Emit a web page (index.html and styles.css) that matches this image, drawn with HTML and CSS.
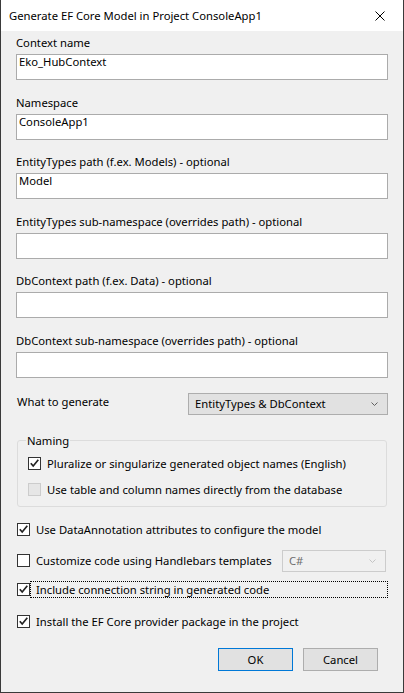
FILE: index.html
```html
<!DOCTYPE html>
<html lang="en">
<head>
  <meta charset="UTF-8">
  <meta name="viewport" content="width=device-width, initial-scale=1.0">
  <title>Generate EF Core Model</title>
  <link rel="stylesheet" href="styles.css">
</head>
<body>
  <div class="window">
    <div class="titlebar">
      <span class="title">Generate EF Core Model in Project ConsoleApp1</span>
      <svg class="close" width="10" height="10" viewBox="0 0 10 10">
        <path d="M0.5 0.5 L9.5 9.5 M9.5 0.5 L0.5 9.5" stroke="#000" stroke-width="1" fill="none"/>
      </svg>
    </div>

    <div class="content">
      <div class="field">
        <label>Context name</label>
        <div class="textbox">Eko_HubContext</div>
      </div>
      <div class="field">
        <label>Namespace</label>
        <div class="textbox">ConsoleApp1</div>
      </div>
      <div class="field">
        <label>EntityTypes path (f.ex. Models) - optional</label>
        <div class="textbox">Model</div>
      </div>
      <div class="field">
        <label>EntityTypes sub-namespace (overrides path) - optional</label>
        <div class="textbox"></div>
      </div>
      <div class="field">
        <label>DbContext path (f.ex. Data) - optional</label>
        <div class="textbox"></div>
      </div>
      <div class="field">
        <label>DbContext sub-namespace (overrides path) - optional</label>
        <div class="textbox"></div>
      </div>

      <div class="generate-row">
        <span class="generate-label">What to generate</span>
        <div class="combo">
          <span>EntityTypes &amp; DbContext</span>
          <svg class="chevron" width="7" height="4" viewBox="0 0 7 4"><path d="M0.5 0.5 L3.5 3.5 L6.5 0.5" stroke="#606060" fill="none"/></svg>
        </div>
      </div>

      <fieldset class="group">
        <legend>Naming</legend>
        <div class="check-row">
          <span class="box checked"><svg width="11" height="11" viewBox="0 0 11 11"><path d="M1.8 5.2 L4.2 8 L9.3 1.8" stroke="#222" stroke-width="1.7" fill="none"/></svg></span>
          <span class="check-text">Pluralize or singularize generated object names (English)</span>
        </div>
        <div class="check-row">
          <span class="box disabled"></span>
          <span class="check-text">Use table and column names directly from the database</span>
        </div>
      </fieldset>

      <div class="check-row outer first">
        <span class="box checked"><svg width="11" height="11" viewBox="0 0 11 11"><path d="M1.8 5.2 L4.2 8 L9.3 1.8" stroke="#222" stroke-width="1.7" fill="none"/></svg></span>
        <span class="check-text">Use DataAnnotation attributes to configure the model</span>
      </div>
      <div class="check-row outer with-combo">
        <span class="box"></span>
        <span class="check-text">Customize code using Handlebars templates</span>
        <div class="combo disabled-combo">
          <span>C#</span>
          <svg class="chevron" width="7" height="4" viewBox="0 0 7 4"><path d="M0.5 0.5 L3.5 3.5 L6.5 0.5" stroke="#c4c4c4" fill="none"/></svg>
        </div>
      </div>
      <div class="check-row outer focus-row">
        <span class="box checked"><svg width="11" height="11" viewBox="0 0 11 11"><path d="M1.8 5.2 L4.2 8 L9.3 1.8" stroke="#222" stroke-width="1.7" fill="none"/></svg></span>
        <span class="check-text focused">Include connection string in generated code</span>
      </div>
      <div class="check-row outer last">
        <span class="box checked"><svg width="11" height="11" viewBox="0 0 11 11"><path d="M1.8 5.2 L4.2 8 L9.3 1.8" stroke="#222" stroke-width="1.7" fill="none"/></svg></span>
        <span class="check-text">Install the EF Core provider package in the project</span>
      </div>

      <div class="buttons">
        <button class="default">OK</button>
        <button>Cancel</button>
      </div>
    </div>
  </div>
</body>
</html>
```

FILE: styles.css
```css
body {
  margin: 0;
  font-family: "Noto Sans", "Open Sans", sans-serif;
  font-size: 11.25px;
  color: #000;
  background: #f0f0f0;
}
.window {
  width: 404px;
  height: 693px;
  box-sizing: border-box;
  border: 1px solid #3a3a3a;
  border-top: none;
  background: #f0f0f0;
  display: flex;
  flex-direction: column;
}
.titlebar {
  height: 31px;
  background: #ffffff;
  display: flex;
  align-items: center;
  justify-content: space-between;
  padding: 0 18px 0 8px;
}
.title {
  line-height: 16px;
}
.content {
  padding: 4px 15px 0 15px;
}
.field {
  margin-bottom: 14.6px;
}
.field label {
  display: block;
  line-height: 16px;
  margin-bottom: 3px;
}
.textbox {
  height: 26px;
  box-sizing: border-box;
  border: 1px solid #ababab;
  background: #ffffff;
  padding: 0 2px;
  line-height: 14px;
}
/* What to generate */
.generate-row {
  display: flex;
  align-items: center;
  justify-content: space-between;
}
.generate-label {
  padding-left: 1px;
  line-height: 16px;
  margin-top: -3px;
}
.combo {
  width: 200px;
  height: 22px;
  box-sizing: border-box;
  border: 1px solid #adadad;
  background: #e1e1e1;
  display: flex;
  align-items: center;
  justify-content: space-between;
  padding: 0 9px 0 6px;
  flex-shrink: 0;
}
.chevron {
  flex-shrink: 0;
}
/* Naming group */
.group {
  margin: 18px 1px 0 1px;
  padding: 6px 10px 8px 10px;
  border: 1px solid #dcdcdc;
  border-radius: 3px;
}
.group legend {
  padding: 0 1px;
  margin-left: -2px;
  line-height: 16px;
}
.check-row {
  display: flex;
  align-items: center;
  height: 17px;
}
.group .check-row + .check-row {
  margin-top: 9px;
}
.box {
  width: 13px;
  height: 13px;
  box-sizing: border-box;
  border: 1px solid #333333;
  background: #ffffff;
  flex-shrink: 0;
  display: flex;
}
.box.disabled {
  border-color: #cccccc;
  background: #e6e6e6;
}
.check-text {
  border: 1px dotted transparent;
  padding: 0 5px;
  line-height: 15px;
  white-space: nowrap;
}
.check-text.focused {
  border-color: #000;
  flex: 1;
}
.check-row.outer {
  padding-left: 1px;
}
.check-row.first {
  margin-top: 14px;
}
.check-row.with-combo {
  height: 22px;
  margin-top: 12px;
}
.check-row.focus-row {
  margin-top: 9px;
}
.check-row.last {
  margin-top: 15px;
}
.disabled-combo {
  width: 104px;
  margin-left: auto;
  margin-right: 2px;
  border-color: #cccccc;
  background: #f0f0f0;
  color: #6d6d6d;
}
/* Buttons */
.buttons {
  display: flex;
  justify-content: flex-end;
  gap: 10px;
  padding-right: 10px;
  margin-top: 18px;
}
button {
  width: 75px;
  height: 23px;
  box-sizing: border-box;
  border: 1px solid #adadad;
  background: #e1e1e1;
  font-family: inherit;
  font-size: inherit;
  color: #000;
  padding: 0;
}
button.default {
  border-color: #0078d7;
}
```
